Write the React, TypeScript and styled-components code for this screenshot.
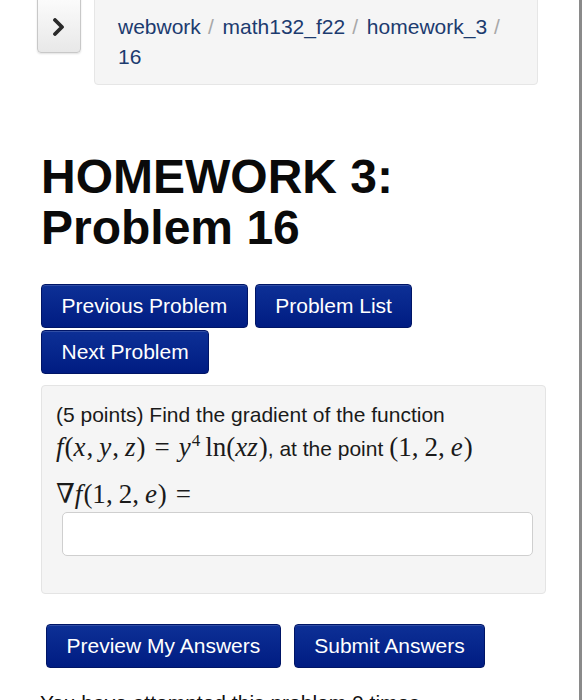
import React from 'react';
import styled, { createGlobalStyle } from 'styled-components';

const GlobalStyle = createGlobalStyle`
  body {
    margin: 0;
    background: #fff;
    font-family: 'Liberation Sans', Arial, sans-serif;
    color: #222;
  }
`;

const Frame = styled.div`
  width: 538px;
  height: 700px;
  overflow: hidden;
  padding: 0 0 0 41px;
  border-right: 3px solid #8a8a8a;
  box-sizing: content-box;
`;

const Content = styled.div`
  width: 505px;
`;

const TopBar = styled.div`
  display: flex;
  gap: 13px;
  margin: -12px 8px 0 -4px;
  align-items: flex-start;
`;

const Toggle = styled.button`
  flex: none;
  width: 44px;
  height: 65px;
  padding: 12px 0 0;
  border: 1px solid #c8c8c8;
  border-radius: 4px;
  background: linear-gradient(to bottom, #ffffff, #e8e8e8);
  box-shadow: 0 1px 2px rgba(0, 0, 0, 0.12);
  display: flex;
  align-items: center;
  justify-content: center;
`;

const Breadcrumb = styled.ul`
  flex: 1;
  margin: 0;
  list-style: none;
  padding: 23px 20px 12px 23px;
  background: #f5f5f5;
  border: 1px solid #e6e6e6;
  border-radius: 4px;
  font-size: 21px;
  line-height: 30px;
`;

const Crumb = styled.li`
  display: inline;
  color: #1c3b6f;

  &:not(:last-child)::after {
    content: '/';
    color: #a8a8a8;
    margin: 0 3px 0 7px;
  }
`;

const Heading = styled.h1`
  margin: 66px 0 0;
  font-size: 48px;
  line-height: 51px;
  font-weight: bold;
  color: #0a0a0a;
`;

const ButtonRow = styled.div<{ $gap: number }>`
  display: flex;
  flex-wrap: wrap;
  column-gap: ${(p) => p.$gap}px;
  row-gap: 2px;
`;

const NavRow = styled(ButtonRow)`
  margin-top: 31px;
`;

const SubmitRow = styled(ButtonRow)`
  margin: 30px 0 0 5px;
`;

const Button = styled.button`
  height: 44px;
  padding: 0 19.5px;
  font-family: 'Liberation Sans', Arial, sans-serif;
  font-size: 21px;
  color: #fff;
  border: 1px solid #001566;
  border-radius: 4px;
  background: linear-gradient(to bottom, #0d3096, #001c82);
  box-shadow: inset 0 1px 0 rgba(255, 255, 255, 0.15);
  white-space: nowrap;
`;

const ProblemBox = styled.div`
  margin-top: 11px;
  padding: 13px 14px 37px;
  background: #f5f5f5;
  border: 1px solid #e4e4e4;
  border-radius: 4px;
  font-size: 21px;
  line-height: 32px;
  color: #1a1a1a;
`;

const Para = styled.p`
  margin: 0;
`;

const AnswerLabel = styled.p`
  margin: 13px 0 0;
`;

const MathText = styled.span`
  font-family: 'Liberation Serif', 'DejaVu Serif', serif;
  font-size: 27px;
  white-space: nowrap;
`;

const V = styled.i`
  font-style: italic;
  margin-right: 1px;
`;

const Comma = styled.span`
  margin-right: 6px;
`;

const Rel = styled.span`
  margin: 0 9px;
`;

const Sup = styled.sup`
  font-size: 17px;
  vertical-align: 10px;
  line-height: 0;
  margin-right: 5px;
`;

const AnswerInput = styled.input`
  display: block;
  margin-left: 6px;
  width: 471px;
  height: 44px;
  box-sizing: border-box;
  border: 1px solid #cfcfcf;
  border-radius: 5px;
  background: #fff;
`;

const Attempts = styled.p`
  margin: 20px 0 0 -1px;
  font-size: 21px;
  line-height: 30px;
  color: #111;
`;

function Chevron() {
  return (
    <svg width="14" height="18" viewBox="0 0 14 18">
      <polyline
        points="3,2 10,9 3,16"
        fill="none"
        stroke="#2a2a2a"
        strokeWidth="3.8"
        strokeLinecap="round"
        strokeLinejoin="round"
      />
    </svg>
  );
}

export default function App() {
  return (
    <Frame>
      <GlobalStyle />
      <Content>
        <TopBar>
          <Toggle aria-label="toggle">
            <Chevron />
          </Toggle>
          <Breadcrumb>
            <Crumb>webwork</Crumb> <Crumb>math132_f22</Crumb>{' '}
            <Crumb>homework_3</Crumb> <Crumb>16</Crumb>
          </Breadcrumb>
        </TopBar>

        <Heading>
          HOMEWORK 3:
          <br />
          Problem 16
        </Heading>

        <NavRow $gap={7}>
          <Button>Previous Problem</Button>
          <Button>Problem List</Button>
          <Button>Next Problem</Button>
        </NavRow>

        <ProblemBox>
          <Para>
            (5 points) Find the gradient of the function{' '}
            <MathText>
              <V>f</V>(<V>x</V>
              <Comma>,</Comma>
              <V>y</V>
              <Comma>,</Comma>
              <V>z</V>)<Rel>=</Rel>
              <V>y</V>
              <Sup>4</Sup>ln(<V>xz</V>)
            </MathText>
            , at the point{' '}
            <MathText>
              (1<Comma>,</Comma>2<Comma>,</Comma>
              <V>e</V>)
            </MathText>
          </Para>
          <AnswerLabel>
            <MathText>
              ∇<V>f</V>(1<Comma>,</Comma>2<Comma>,</Comma>
              <V>e</V>)<Rel>=</Rel>
            </MathText>
          </AnswerLabel>
          <AnswerInput type="text" />
        </ProblemBox>

        <SubmitRow $gap={13}>
          <Button>Preview My Answers</Button>
          <Button>Submit Answers</Button>
        </SubmitRow>

        <Attempts>You have attempted this problem 0 times.</Attempts>
      </Content>
    </Frame>
  );
}
